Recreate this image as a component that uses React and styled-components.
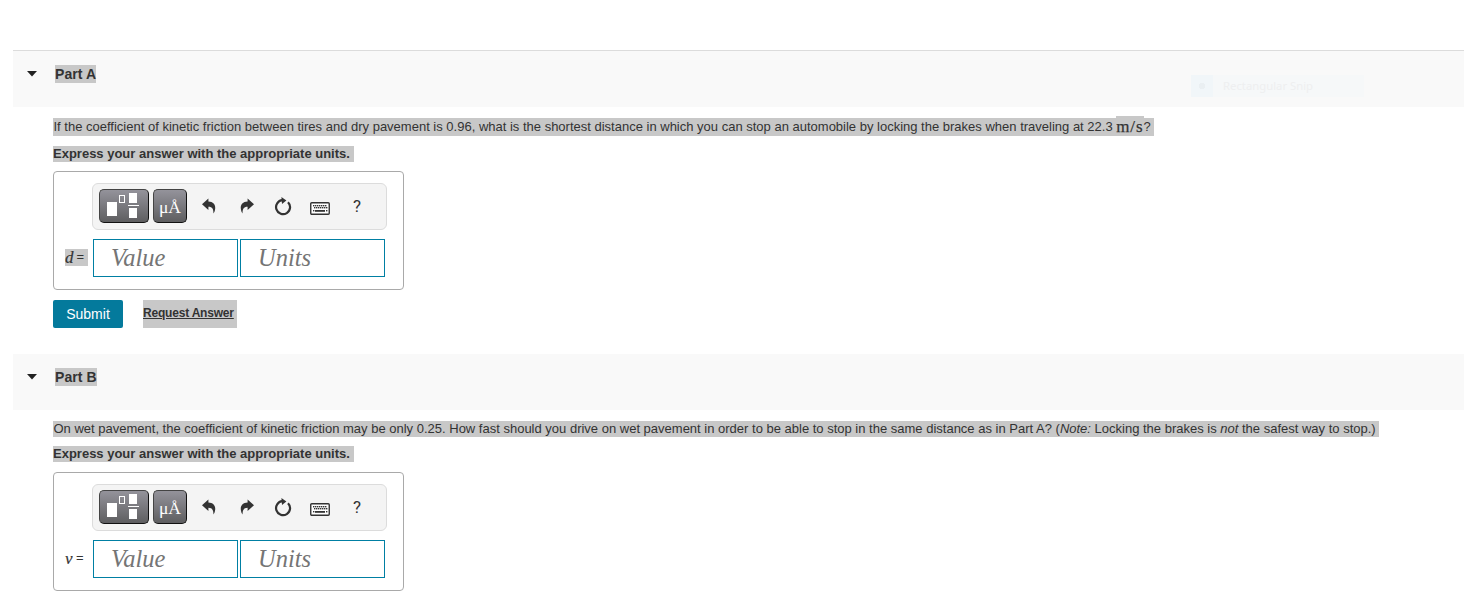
import React from 'react';
import styled, { createGlobalStyle } from 'styled-components';

const GlobalStyle = createGlobalStyle`
    * {
        box-sizing: border-box;
    }
    body {
        margin: 0;
        background: #fff;
        color: #333;
        font-family: "Liberation Sans", Arial, sans-serif;
        overflow: hidden;
    }
`;

const UndoShape = () => (
    <path d="M0 6.2 L6.4 0.4 V3.6 C11 3.8 13.6 6.4 13.2 10.6 C13 12.8 12.4 14.4 11.4 15.6 C11.6 11.4 10.4 8.8 6.4 8.8 V12 Z" />
);

const KEYS = [
    [3, 3], [5, 3], [7, 3], [9, 3], [11, 3], [13, 3], [15, 3],
    [4, 5], [6, 5], [8, 5], [10, 5], [12, 5], [14, 5], [16, 5],
    [3, 8], [16, 8],
];

const Toolbar = () => (
    <ToolbarWrapper>
        <ToolButton $width={50} aria-label="Templates">
            <svg width="48" height="32" fill="#fff">
                <rect x="7" y="12" width="10" height="14" />
                <rect x="19.5" y="5.5" width="5" height="7" fill="none" stroke="#fff" />
                <rect x="29" y="3" width="8" height="10" />
                <rect x="28" y="15" width="11" height="1" />
                <rect x="29" y="18" width="8" height="10" />
            </svg>
        </ToolButton>
        <ToolButton $width={34} $drop={3}>μÅ</ToolButton>
        <IconButton $left={11} $top={9}>
            <svg width="14" height="16" fill="#333"><UndoShape /></svg>
        </IconButton>
        <IconButton $left={24} $top={9}>
            <svg width="14" height="16" fill="#333">
                <g transform="translate(14 0) scale(-1 1)"><UndoShape /></g>
            </svg>
        </IconButton>
        <IconButton $left={20} $top={8}>
            <svg width="18" height="19" fill="none" stroke="#333" strokeWidth="2.2">
                <path d="M14 5.2 A7 7 0 1 1 8.4 3.2" />
                <path d="M7.4 0 L12.4 3.4 L8 7 Z" fill="#333" stroke="none" />
            </svg>
        </IconButton>
        <IconButton $left={18} $top={13}>
            <svg width="20" height="13" fill="#333">
                <rect x="0.75" y="0.75" width="18.5" height="11.5" rx="1" fill="#fff" stroke="#333" strokeWidth="1.4" />
                {KEYS.map(([x, y]) => (
                    <rect key={`${x}-${y}`} x={x} y={y} width="1.4" height="1.4" />
                ))}
                <rect x="5" y="8" width="10" height="1.8" />
            </svg>
        </IconButton>
        <Help>?</Help>
    </ToolbarWrapper>
);

const AnswerBox = ({ symbol, selected, top }) => (
    <AnswerFrame $top={top}>
        <Toolbar />
        <AnswerRow>
            <Variable $selected={selected}>
                <i>{symbol}</i>=
            </Variable>
            <Field placeholder="Value" />
            <Field placeholder="Units" />
        </AnswerRow>
    </AnswerFrame>
);

const PartHeader = ({ title, line, children }) => (
    <HeaderBar $line={line}>
        <svg width="10" height="6" fill="#222"><path d="M0 0 H10 L5 5.5 Z" /></svg>
        <Title>{title}</Title>
        {children}
    </HeaderBar>
);

const App = () => {
    return (
        <Page>
            <GlobalStyle />
            <PartHeader title="Part A" line>
                <Snip>
                    <SnipIcon />
                    Rectangular Snip
                </Snip>
            </PartHeader>
            <Body>
                <Question $height={18}>
                    If the coefficient of kinetic friction between tires and dry pavement is 0.96, what is the shortest distance in which you can stop an automobile by locking the brakes when traveling at 22.3 <Unit>m/s</Unit>?
                </Question>
                <Instruction $top={10}>Express your answer with the appropriate units. </Instruction>
                <AnswerBox symbol="d" top={9} selected />
                <Actions>
                    <Submit>Submit</Submit>
                    <Request>Request Answer</Request>
                </Actions>
            </Body>
            <PartHeader title="Part B" />
            <Body>
                <Question $height={16}>
                    On wet pavement, the coefficient of kinetic friction may be only 0.25. How fast should you drive on wet pavement in order to be able to stop in the same distance as in Part A? (<i>Note:</i> Locking the brakes is <i>not</i> the safest way to stop.)
                </Question>
                <Instruction $top={9}>Express your answer with the appropriate units. </Instruction>
                <AnswerBox symbol="v" top={10} />
            </Body>
        </Page>
    );
};

const Page = styled.div`
    height: 597px;
    padding: 50px 0 0 13px;
    overflow: hidden;
`;

const HeaderBar = styled.div`
    display: flex;
    align-items: flex-start;
    height: ${({ $line }) => ($line ? 57 : 56)}px;
    padding-left: 14px;
    background: #f9f9f9;
    border-top: ${({ $line }) => ($line ? '1px solid #dcdcdc' : 'none')};

    > svg {
        margin-top: 20px;
    }
`;

const Title = styled.h2`
    margin: 14px 0 0 18px;
    height: 18px;
    background: #c8c8c8;
    font-size: 14px;
    line-height: 18px;
    font-weight: 700;
    letter-spacing: 0.08px;
`;

const Snip = styled.div`
    display: flex;
    align-items: center;
    gap: 10px;
    width: 173px;
    height: 22px;
    margin: 24px 100px 0 auto;
    background: #f6f8f9;
    color: #eeeff0;
    font: 11.3px/20px "Noto Sans", sans-serif;
`;

const SnipIcon = styled.span`
    width: 22px;
    height: 22px;
    background: radial-gradient(circle, #eaeff2 3px, #f1f6f9 3.5px);
`;

const Body = styled.div`
    display: flex;
    flex-direction: column;
    align-items: flex-start;
    padding: 11px 0 0 40px;
`;

const Question = styled.p`
    margin: 0;
    height: ${({ $height }) => $height}px;
    padding: 0 3px 0 0.5px;
    background: #c8c8c8;
    font-size: 13px;
    line-height: ${({ $height }) => $height}px;
    white-space: pre;
`;

const Unit = styled.span`
    display: inline-block;
    height: 19px;
    margin-top: -2px;
    background: #c8c8c8;
    font: 17px/22px "Liberation Serif", serif;
    letter-spacing: 0.9px;
    -webkit-text-stroke: 0.25px #333;
    vertical-align: top;
`;

const Instruction = styled.p`
    margin: ${({ $top }) => $top}px 0 0;
    height: 16px;
    background: #c8c8c8;
    font-size: 13px;
    font-weight: 700;
    line-height: 16px;
    white-space: pre;
`;

const AnswerFrame = styled.div`
    width: 351px;
    height: 119px;
    margin-top: ${({ $top }) => $top}px;
    padding: 11px 0 0 11px;
    border: 1px solid #a9a9a9;
    border-radius: 4px;
`;

const ToolbarWrapper = styled.div`
    display: flex;
    align-items: flex-start;
    width: 295px;
    height: 47px;
    margin-left: 27px;
    padding: 5px 6px;
    background: #f4f4f4;
    border: 1px solid #dcdcdc;
    border-radius: 6px;
`;

const ToolButton = styled.button`
    display: flex;
    align-items: center;
    justify-content: center;
    width: ${({ $width }) => $width}px;
    height: 34px;
    margin-right: 4px;
    padding: ${({ $drop = 0 }) => $drop}px 0 0;
    border: 1px solid #111;
    border-top-color: #444;
    border-left-color: #444;
    border-radius: 5px;
    background: linear-gradient(#94939b, #5e5e60);
    color: #fff;
    font: 17.5px/29px "Liberation Serif", serif;

    svg {
        flex: none;
    }
`;

const IconButton = styled.button`
    display: flex;
    margin: ${({ $top, $left }) => `${$top}px 0 0 ${$left}px`};
    padding: 0;
    border: none;
    background: none;
`;

const Help = styled.span`
    margin: 7px 0 0 23px;
    font: 17px/20px Roboto, sans-serif;
`;

const AnswerRow = styled.div`
    display: flex;
    align-items: flex-start;
    gap: 2px;
    margin-top: 9px;
`;

const Variable = styled.label`
    display: flex;
    gap: 3px;
    width: 23px;
    height: 17px;
    margin: 10px 3px 0 0;
    background: ${({ $selected }) => ($selected ? '#c8c8c8' : 'transparent')};
    font-size: 13px;
    line-height: 16px;
    white-space: nowrap;

    i {
        min-width: 8px;
        font: italic 17px/17px "Liberation Serif", serif;
        -webkit-text-stroke: 0.2px #333;
    }
`;

const Field = styled.input`
    width: 145px;
    height: 38px;
    padding: 0 0 0 17px;
    border: 1px solid #007fa3;
    border-radius: 0;
    background: #fff;
    font: italic 24.5px "Liberation Serif", serif;

    &::placeholder {
        color: #757575;
        opacity: 1;
    }
`;

const Actions = styled.div`
    display: flex;
    gap: 20px;
    margin: 10px 0 26px;
`;

const Submit = styled.button`
    width: 70px;
    height: 28px;
    padding: 0;
    border: none;
    border-radius: 2px;
    background: #047a9c;
    color: #fff;
    font: 14px "Liberation Sans", sans-serif;
`;

const Request = styled.a`
    height: 28px;
    width: 94px;
    background: #c8c8c8;
    font-size: 12px;
    font-weight: 700;
    letter-spacing: -0.2px;
    line-height: 26px;
    text-decoration: underline;
    white-space: nowrap;
`;

export default App;
